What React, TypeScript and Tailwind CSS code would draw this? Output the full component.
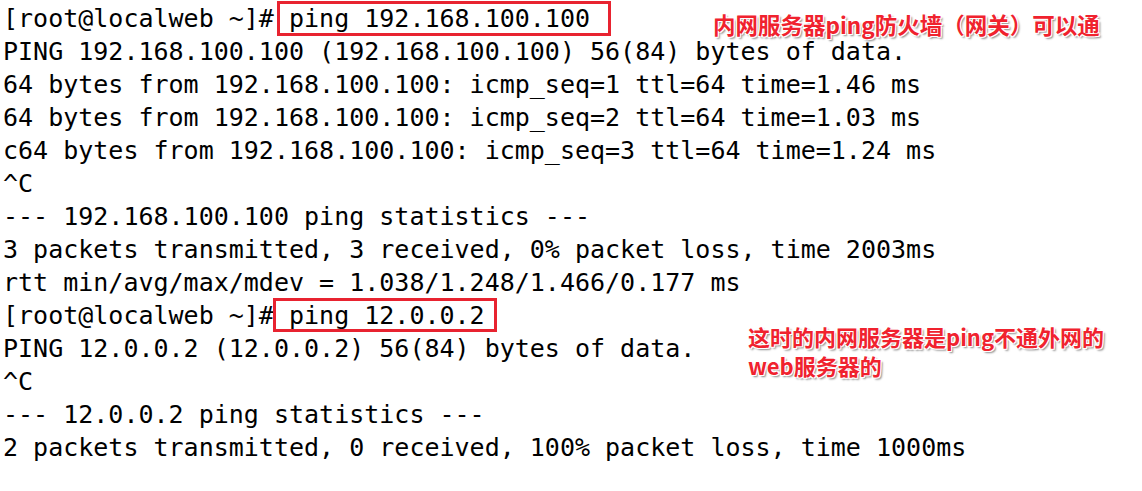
import React from "react";

const mono = { fontFamily: '"DejaVu Sans Mono", "Liberation Mono", monospace' };

export default function App() {
  const lines: React.ReactNode[] = [
    <>
      {"[root@localweb ~]# "}
      <span className="relative inline-block">
        ping 192.168.100.100
        <span className="absolute left-[-12px] right-[-21px] top-[-1px] bottom-[-1px] border-[3px] border-[#e82330]" />
      </span>
    </>,
    "PING 192.168.100.100 (192.168.100.100) 56(84) bytes of data.",
    "64 bytes from 192.168.100.100: icmp_seq=1 ttl=64 time=1.46 ms",
    "64 bytes from 192.168.100.100: icmp_seq=2 ttl=64 time=1.03 ms",
    "c64 bytes from 192.168.100.100: icmp_seq=3 ttl=64 time=1.24 ms",
    "^C",
    "--- 192.168.100.100 ping statistics ---",
    "3 packets transmitted, 3 received, 0% packet loss, time 2003ms",
    "rtt min/avg/max/mdev = 1.038/1.248/1.466/0.177 ms",
    <>
      {"[root@localweb ~]# "}
      <span className="relative inline-block">
        ping 12.0.0.2
        <span className="absolute left-[-16px] right-[-12px] top-[-1px] bottom-[0px] border-[3px] border-[#e82330]" />
      </span>
    </>,
    "PING 12.0.0.2 (12.0.0.2) 56(84) bytes of data.",
    "^C",
    "--- 12.0.0.2 ping statistics ---",
    "2 packets transmitted, 0 received, 100% packet loss, time 1000ms",
  ];
  const note = {
    fontFamily: '"Noto Sans CJK SC", "Noto Sans", sans-serif',
    textShadow: "1px 1px 0 #fff, -1px -1px 0 #fff, 1px -1px 0 #fff, -1px 1px 0 #fff, 2px 2px 2px #888",
  };
  return (
    <div className="relative w-[1142px] h-[491px] bg-white overflow-hidden">
      <div className="pt-[2px] pl-[3px] text-[25px] text-black" style={mono}>
        {lines.map((l, i) => (
          <div key={i} className="h-[33px] leading-[33px] whitespace-pre">
            {l}
          </div>
        ))}
      </div>
      <div className="absolute left-[713px] top-[9px] text-[22.5px] leading-[30px] font-bold text-[#f0222e] whitespace-nowrap" style={note}>
        内网服务器ping防火墙（网关）可以通
      </div>
      <div className="absolute left-[748px] top-[322px] text-[22px] leading-[29px] font-bold text-[#f0222e] whitespace-nowrap" style={note}>
        <div>这时的内网服务器是ping不通外网的</div>
        <div>web服务器的</div>
      </div>
    </div>
  );
}
